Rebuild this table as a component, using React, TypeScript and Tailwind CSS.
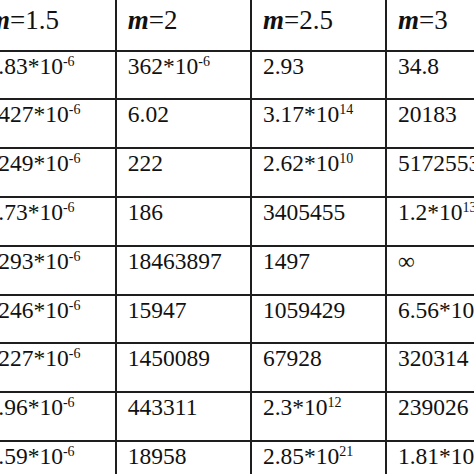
type Cell = { base: string; exp?: string };

const header = ["1.5", "2", "2.5", "3"];

const rows: Cell[][] = [
  [{ base: "1.83*10", exp: "-6" }, { base: "362*10", exp: "-6" }, { base: "2.93" }, { base: "34.8" }],
  [{ base: "1427*10", exp: "-6" }, { base: "6.02" }, { base: "3.17*10", exp: "14" }, { base: "20183" }],
  [{ base: "1249*10", exp: "-6" }, { base: "222" }, { base: "2.62*10", exp: "10" }, { base: "5172553" }],
  [{ base: "1.73*10", exp: "-6" }, { base: "186" }, { base: "3405455" }, { base: "1.2*10", exp: "13" }],
  [{ base: "1293*10", exp: "-6" }, { base: "18463897" }, { base: "1497" }, { base: "∞" }],
  [{ base: "1246*10", exp: "-6" }, { base: "15947" }, { base: "1059429" }, { base: "6.56*10", exp: "15" }],
  [{ base: "1227*10", exp: "-6" }, { base: "1450089" }, { base: "67928" }, { base: "320314" }],
  [{ base: "1.96*10", exp: "-6" }, { base: "443311" }, { base: "2.3*10", exp: "12" }, { base: "239026" }],
  [{ base: "1.59*10", exp: "-6" }, { base: "18958" }, { base: "2.85*10", exp: "21" }, { base: "1.81*10", exp: "12" }],
];

export default function App() {
  return (
    <div className="w-[474px] h-[474px] overflow-hidden bg-white [font-family:'Liberation_Serif','Times_New_Roman',serif] text-[#111]">
      <div className="-ml-[27px] grid w-max grid-cols-[141.5px_133.2px_133px_170px] grid-rows-[49.6px_repeat(9,46.8px)] gap-[2px] bg-[#1e1e1e]">
        {/* header */}
        {header.map((m, i) => (
          <div
            key={m}
            className={`bg-white pt-[7px] text-[27px] leading-none whitespace-nowrap ${i === 0 ? "pl-[16px]" : "pl-[11.3px]"}`}
          >
            <span className="font-bold italic">m</span>={m}
          </div>
        ))}

        {/* body */}
        {rows.map((row, r) =>
          row.map((c, i) => (
            <div
              key={`${r}-${i}`}
              className={`bg-white pt-[3px] text-[23.5px] leading-none whitespace-nowrap ${i === 0 ? "pl-[13.5px]" : "pl-[11.3px]"}`}
            >
              {c.base}
              {c.exp && <sup className="relative -top-[8px] align-baseline text-[14px] leading-none">{c.exp}</sup>}
            </div>
          ))
        )}
      </div>
    </div>
  );
}
